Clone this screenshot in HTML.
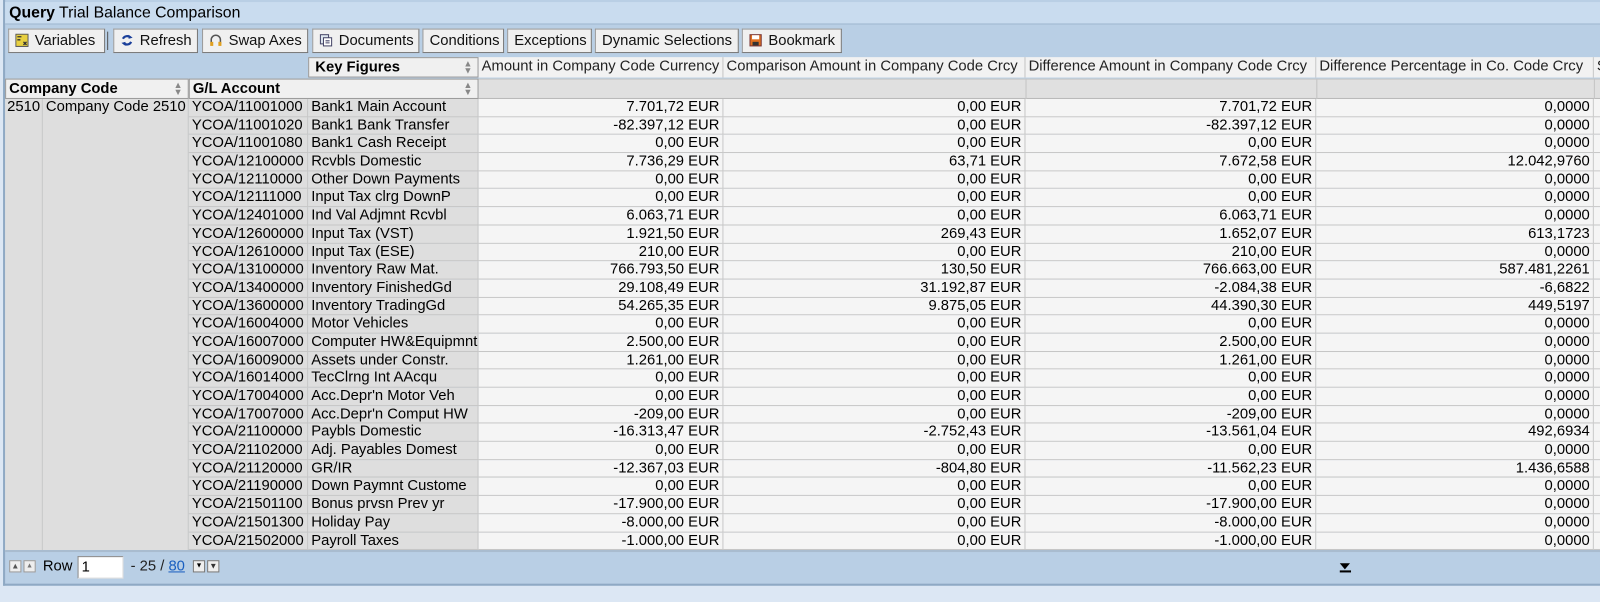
<!DOCTYPE html>
<html><head><meta charset="utf-8"><style>
*{box-sizing:border-box;margin:0;padding:0}
html,body{width:1600px;height:602px;overflow:hidden;background:#dce7f4}
#wrap{position:absolute;left:0;top:0;width:1568px;height:590px;transform:scale(1.0204);transform-origin:0 0;font-family:"Liberation Sans",Arial,sans-serif;font-size:14.5px;color:#000}
.abs{position:absolute}
#frame{left:3px;top:0;width:1600px;height:574px;background:#b9cfe5;border-left:2px solid #8fa9c4;border-bottom:2px solid #8fa9c4}
#title{left:5px;top:2px;height:22px;width:1595px;background:#c9dcef;border-bottom:1px solid #9fb6cf;font-size:15.5px;line-height:22px;padding-left:4px}
.btn{position:absolute;top:28px;height:24px;background:#f0f0f0;border:1px solid #9a9a9a;border-right-color:#777;border-bottom-color:#777;line-height:22px;padding-left:6px;white-space:nowrap;color:#111}
.ico{display:inline-block;width:13px;height:13px;vertical-align:-2px;margin-right:6px}
.h{position:absolute;height:20px;line-height:19px;white-space:nowrap;overflow:hidden}
.kf{background:#f0f0f0;border:1px solid #999;font-weight:bold;padding-left:6px}
.sort{position:absolute;right:5px;top:2px;font-size:9px;line-height:7px;color:#888}
.ch{background:#f2f2f2;border-right:1px solid #c4c4c4;padding-left:3px;color:#222}
.rows{position:absolute;left:185px;top:97px}
.r{display:flex;height:17.7px;line-height:17px;white-space:nowrap}
.r div{border-right:1px solid #c6c6c6;border-bottom:1px solid #c6c6c6;overflow:hidden;height:17.7px}
.a{width:117px;background:#dedede;padding-left:3px}
.b{width:167px;background:#dedede;padding-left:3px}
.n{background:#f5f5f5;text-align:right;padding-right:3px}
.c5{width:240px}.c6{width:296px}.c7{width:285px}.c8{width:272px}.c9{width:40px}
</style></head><body><div id="wrap">
<div id="frame" class="abs"></div>
<div id="title" class="abs"><b>Query</b> Trial Balance Comparison</div>

<div class="btn" style="left:8px;width:95px"><svg class="ico" viewBox="0 0 13 13"><rect x="0.5" y="0.5" width="12" height="12" fill="#e8d040" stroke="#555"/><path d="M2 3h4M2 6h3M8 8l3 3M11 8l-3 3" stroke="#333" stroke-width="1.3"/></svg>Variables</div>
<div class="abs" style="left:105px;top:31px;height:18px;width:1px;background:#555"></div>
<div class="btn" style="left:111px;width:83px"><svg class="ico" viewBox="0 0 13 13"><path d="M10 4A4.5 4.5 0 0 0 2.5 5" stroke="#1a3f9a" stroke-width="2.2" fill="none"/><path d="M3 9a4.5 4.5 0 0 0 7.5-1" stroke="#1a3f9a" stroke-width="2.2" fill="none"/><path d="M8 1l4 3-4 1z M5 12l-4-3 4-1z" fill="#1a3f9a"/></svg>Refresh</div>
<div class="btn" style="left:198px;width:104px"><svg class="ico" viewBox="0 0 13 13"><path d="M2 10V6a4.5 4.5 0 0 1 9 0v4" stroke="#555" stroke-width="1.5" fill="none"/><rect x="1" y="8" width="3" height="4" fill="#e0a020"/><rect x="9" y="8" width="3" height="4" fill="#e0a020"/></svg>Swap Axes</div>
<div class="btn" style="left:306px;width:105px"><svg class="ico" viewBox="0 0 13 13"><rect x="1" y="1" width="8" height="9" fill="#dfe8f0" stroke="#446"/><rect x="4" y="4" width="8" height="8" fill="#fff" stroke="#446"/><path d="M6 7h4M6 9h4" stroke="#446"/></svg>Documents</div>
<div class="btn" style="left:414px;width:80px">Conditions</div>
<div class="btn" style="left:497px;width:83px">Exceptions</div>
<div class="btn" style="left:583px;width:141px">Dynamic Selections</div>
<div class="btn" style="left:727px;width:98px"><svg class="ico" viewBox="0 0 13 13"><rect x="1" y="1" width="11" height="11" fill="#e07020" stroke="#733"/><rect x="3" y="1.5" width="7" height="4" fill="#fff"/><rect x="3.5" y="8" width="6" height="3.5" fill="#333"/></svg>Bookmark</div>

<div class="h kf" style="left:302px;top:56px;width:167px">Key Figures<span class="sort">▲<br>▼</span></div>
<div class="h ch" style="left:469px;top:56px;width:240px">Amount in Company Code Currency</div>
<div class="h ch" style="left:709px;top:56px;width:296px">Comparison Amount in Company Code Crcy</div>
<div class="h ch" style="left:1005px;top:56px;width:285px">Difference Amount in Company Code Crcy</div>
<div class="h ch" style="left:1290px;top:56px;width:272px">Difference Percentage in Co. Code Crcy</div>
<div class="h ch" style="left:1562px;top:56px;width:40px">S</div>
<div class="h kf" style="left:5px;top:77px;width:180px;padding-left:3px">Company Code<span class="sort">▲<br>▼</span></div>
<div class="h kf" style="left:185px;top:77px;width:284px;padding-left:3px">G/L Account<span class="sort">▲<br>▼</span></div>
<div class="h" style="left:469px;top:77px;width:1131px;background:#e0e0e0;border-top:1px solid #c4c4c4;border-bottom:1px solid #b8b8b8"></div>
<div class="abs" style="left:1005px;top:77px;width:1px;height:20px;background:#c4c4c4"></div>
<div class="abs" style="left:1290px;top:77px;width:1px;height:20px;background:#c4c4c4"></div>
<div class="abs" style="left:1562px;top:77px;width:1px;height:20px;background:#c4c4c4"></div>

<div class="abs" style="left:5px;top:97px;width:37px;height:443px;background:#dedede;border-right:1px solid #c6c6c6;padding-left:2px;line-height:17px">2510</div>
<div class="abs" style="left:42px;top:97px;width:143px;height:443px;background:#dedede;border-right:1px solid #c6c6c6;padding-left:3px;line-height:17px;white-space:nowrap">Company Code 2510</div>

<div class="rows">
<div class="r"><div class="a">YCOA/11001000</div><div class="b">Bank1 Main Account</div><div class="n c5">7.701,72 EUR</div><div class="n c6">0,00 EUR</div><div class="n c7">7.701,72 EUR</div><div class="n c8">0,0000</div><div class="n c9"></div></div>
<div class="r"><div class="a">YCOA/11001020</div><div class="b">Bank1 Bank Transfer</div><div class="n c5">-82.397,12 EUR</div><div class="n c6">0,00 EUR</div><div class="n c7">-82.397,12 EUR</div><div class="n c8">0,0000</div><div class="n c9"></div></div>
<div class="r"><div class="a">YCOA/11001080</div><div class="b">Bank1 Cash Receipt</div><div class="n c5">0,00 EUR</div><div class="n c6">0,00 EUR</div><div class="n c7">0,00 EUR</div><div class="n c8">0,0000</div><div class="n c9"></div></div>
<div class="r"><div class="a">YCOA/12100000</div><div class="b">Rcvbls Domestic</div><div class="n c5">7.736,29 EUR</div><div class="n c6">63,71 EUR</div><div class="n c7">7.672,58 EUR</div><div class="n c8">12.042,9760</div><div class="n c9"></div></div>
<div class="r"><div class="a">YCOA/12110000</div><div class="b">Other Down Payments</div><div class="n c5">0,00 EUR</div><div class="n c6">0,00 EUR</div><div class="n c7">0,00 EUR</div><div class="n c8">0,0000</div><div class="n c9"></div></div>
<div class="r"><div class="a">YCOA/12111000</div><div class="b">Input Tax clrg DownP</div><div class="n c5">0,00 EUR</div><div class="n c6">0,00 EUR</div><div class="n c7">0,00 EUR</div><div class="n c8">0,0000</div><div class="n c9"></div></div>
<div class="r"><div class="a">YCOA/12401000</div><div class="b">Ind Val Adjmnt Rcvbl</div><div class="n c5">6.063,71 EUR</div><div class="n c6">0,00 EUR</div><div class="n c7">6.063,71 EUR</div><div class="n c8">0,0000</div><div class="n c9"></div></div>
<div class="r"><div class="a">YCOA/12600000</div><div class="b">Input Tax (VST)</div><div class="n c5">1.921,50 EUR</div><div class="n c6">269,43 EUR</div><div class="n c7">1.652,07 EUR</div><div class="n c8">613,1723</div><div class="n c9"></div></div>
<div class="r"><div class="a">YCOA/12610000</div><div class="b">Input Tax (ESE)</div><div class="n c5">210,00 EUR</div><div class="n c6">0,00 EUR</div><div class="n c7">210,00 EUR</div><div class="n c8">0,0000</div><div class="n c9"></div></div>
<div class="r"><div class="a">YCOA/13100000</div><div class="b">Inventory Raw Mat.</div><div class="n c5">766.793,50 EUR</div><div class="n c6">130,50 EUR</div><div class="n c7">766.663,00 EUR</div><div class="n c8">587.481,2261</div><div class="n c9"></div></div>
<div class="r"><div class="a">YCOA/13400000</div><div class="b">Inventory FinishedGd</div><div class="n c5">29.108,49 EUR</div><div class="n c6">31.192,87 EUR</div><div class="n c7">-2.084,38 EUR</div><div class="n c8">-6,6822</div><div class="n c9"></div></div>
<div class="r"><div class="a">YCOA/13600000</div><div class="b">Inventory TradingGd</div><div class="n c5">54.265,35 EUR</div><div class="n c6">9.875,05 EUR</div><div class="n c7">44.390,30 EUR</div><div class="n c8">449,5197</div><div class="n c9"></div></div>
<div class="r"><div class="a">YCOA/16004000</div><div class="b">Motor Vehicles</div><div class="n c5">0,00 EUR</div><div class="n c6">0,00 EUR</div><div class="n c7">0,00 EUR</div><div class="n c8">0,0000</div><div class="n c9"></div></div>
<div class="r"><div class="a">YCOA/16007000</div><div class="b">Computer HW&amp;Equipmnt</div><div class="n c5">2.500,00 EUR</div><div class="n c6">0,00 EUR</div><div class="n c7">2.500,00 EUR</div><div class="n c8">0,0000</div><div class="n c9"></div></div>
<div class="r"><div class="a">YCOA/16009000</div><div class="b">Assets under Constr.</div><div class="n c5">1.261,00 EUR</div><div class="n c6">0,00 EUR</div><div class="n c7">1.261,00 EUR</div><div class="n c8">0,0000</div><div class="n c9"></div></div>
<div class="r"><div class="a">YCOA/16014000</div><div class="b">TecClrng Int AAcqu</div><div class="n c5">0,00 EUR</div><div class="n c6">0,00 EUR</div><div class="n c7">0,00 EUR</div><div class="n c8">0,0000</div><div class="n c9"></div></div>
<div class="r"><div class="a">YCOA/17004000</div><div class="b">Acc.Depr'n Motor Veh</div><div class="n c5">0,00 EUR</div><div class="n c6">0,00 EUR</div><div class="n c7">0,00 EUR</div><div class="n c8">0,0000</div><div class="n c9"></div></div>
<div class="r"><div class="a">YCOA/17007000</div><div class="b">Acc.Depr'n Comput HW</div><div class="n c5">-209,00 EUR</div><div class="n c6">0,00 EUR</div><div class="n c7">-209,00 EUR</div><div class="n c8">0,0000</div><div class="n c9"></div></div>
<div class="r"><div class="a">YCOA/21100000</div><div class="b">Paybls Domestic</div><div class="n c5">-16.313,47 EUR</div><div class="n c6">-2.752,43 EUR</div><div class="n c7">-13.561,04 EUR</div><div class="n c8">492,6934</div><div class="n c9"></div></div>
<div class="r"><div class="a">YCOA/21102000</div><div class="b">Adj. Payables Domest</div><div class="n c5">0,00 EUR</div><div class="n c6">0,00 EUR</div><div class="n c7">0,00 EUR</div><div class="n c8">0,0000</div><div class="n c9"></div></div>
<div class="r"><div class="a">YCOA/21120000</div><div class="b">GR/IR</div><div class="n c5">-12.367,03 EUR</div><div class="n c6">-804,80 EUR</div><div class="n c7">-11.562,23 EUR</div><div class="n c8">1.436,6588</div><div class="n c9"></div></div>
<div class="r"><div class="a">YCOA/21190000</div><div class="b">Down Paymnt Custome</div><div class="n c5">0,00 EUR</div><div class="n c6">0,00 EUR</div><div class="n c7">0,00 EUR</div><div class="n c8">0,0000</div><div class="n c9"></div></div>
<div class="r"><div class="a">YCOA/21501100</div><div class="b">Bonus prvsn Prev yr</div><div class="n c5">-17.900,00 EUR</div><div class="n c6">0,00 EUR</div><div class="n c7">-17.900,00 EUR</div><div class="n c8">0,0000</div><div class="n c9"></div></div>
<div class="r"><div class="a">YCOA/21501300</div><div class="b">Holiday Pay</div><div class="n c5">-8.000,00 EUR</div><div class="n c6">0,00 EUR</div><div class="n c7">-8.000,00 EUR</div><div class="n c8">0,0000</div><div class="n c9"></div></div>
<div class="r"><div class="a">YCOA/21502000</div><div class="b">Payroll Taxes</div><div class="n c5">-1.000,00 EUR</div><div class="n c6">0,00 EUR</div><div class="n c7">-1.000,00 EUR</div><div class="n c8">0,0000</div><div class="n c9"></div></div>
</div>
<div class="abs" style="left:5px;top:539px;width:1595px;height:2px;background:#a9bccf"></div>

<div class="abs" style="left:9px;top:549px;width:12px;height:12px;background:#eee;border:1px solid #999;font-size:8px;line-height:10px;text-align:center;color:#555">▲</div>
<div class="abs" style="left:23px;top:549px;width:12px;height:12px;background:#eee;border:1px solid #999;font-size:7px;line-height:10px;text-align:center;color:#777">▲</div>
<div class="abs" style="left:42px;top:546px;line-height:18px">Row</div>
<div class="abs" style="left:76px;top:545px;width:45px;height:22px;background:#fff;border:1px solid #888;border-right-color:#ddd;border-bottom-color:#ddd;padding-left:3px;line-height:20px">1</div>
<div class="abs" style="left:128px;top:546px;line-height:18px;color:#222">- 25 / <span style="color:#1a5fc0;text-decoration:underline">80</span></div>
<div class="abs" style="left:189px;top:549px;width:12px;height:12px;background:#eee;border:1px solid #777;font-size:7px;line-height:10px;text-align:center;color:#000">▼</div>
<div class="abs" style="left:203px;top:549px;width:12px;height:12px;background:#eee;border:1px solid #777;font-size:8px;line-height:10px;text-align:center;color:#333">▼</div>
<div class="abs" style="left:1313px;top:552px;width:11px;height:9px;"><div style="width:0;height:0;border-left:5px solid transparent;border-right:5px solid transparent;border-top:6px solid #000"></div><div style="width:11px;height:2px;background:#000;margin-top:1px"></div></div>
</div></body></html>
